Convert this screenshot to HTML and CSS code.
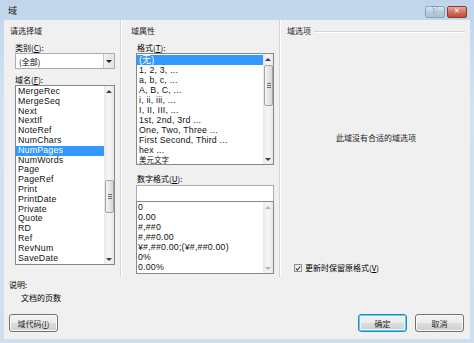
FILE: index.html
```html
<!DOCTYPE html>
<html lang="zh-CN">
<head>
    <meta charset="UTF-8">
    <title>域</title>
    <link rel="stylesheet" href="styles.css">
</head>
<body>
    <div class="window">
        <div class="titlebar">
            <span class="title">域</span>
            <div class="caption-btns">
                <span class="cap-btn cap-help">?</span>
                <span class="cap-btn cap-close">✕</span>
            </div>
        </div>

        <div class="client">
            <div class="panels">
                <!-- 请选择域 -->
                <div class="panel panel-left">
                    <div class="heading">请选择域</div>
                    <div class="field-label">类别(<u>C</u>):</div>
                    <div class="combo">
                        <span class="combo-text">(全部)</span>
                        <span class="combo-btn"><span class="arrow-down"></span></span>
                    </div>
                    <div class="field-label">域名(<u>F</u>):</div>
                    <div class="listbox list-names">
                        <div class="items">
                            <div class="item">MergeRec</div>
                            <div class="item">MergeSeq</div>
                            <div class="item">Next</div>
                            <div class="item">NextIf</div>
                            <div class="item">NoteRef</div>
                            <div class="item">NumChars</div>
                            <div class="item selected">NumPages</div>
                            <div class="item">NumWords</div>
                            <div class="item">Page</div>
                            <div class="item">PageRef</div>
                            <div class="item">Print</div>
                            <div class="item">PrintDate</div>
                            <div class="item">Private</div>
                            <div class="item">Quote</div>
                            <div class="item">RD</div>
                            <div class="item">Ref</div>
                            <div class="item">RevNum</div>
                            <div class="item">SaveDate</div>
                        </div>
                        <div class="scrollbar">
                            <span class="sb-btn"><span class="arrow-up"></span></span>
                            <div class="sb-track"><div class="thumb thumb-names"><span class="grip"></span></div></div>
                            <span class="sb-btn"><span class="arrow-down small"></span></span>
                        </div>
                    </div>
                </div>

                <!-- 域属性 -->
                <div class="panel panel-mid">
                    <div class="heading">域属性</div>
                    <div class="field-label">格式(<u>T</u>):</div>
                    <div class="listbox list-format">
                        <div class="items">
                            <div class="item selected">(无)</div>
                            <div class="item">1, 2, 3, ...</div>
                            <div class="item">a, b, c, ...</div>
                            <div class="item">A, B, C, ...</div>
                            <div class="item">i, ii, iii, ...</div>
                            <div class="item">I, II, III, ...</div>
                            <div class="item">1st, 2nd, 3rd ...</div>
                            <div class="item">One, Two, Three ...</div>
                            <div class="item">First Second, Third ...</div>
                            <div class="item">hex ...</div>
                            <div class="item cjk">美元文字</div>
                        </div>
                        <div class="scrollbar">
                            <span class="sb-btn"><span class="arrow-up"></span></span>
                            <div class="sb-track"><div class="thumb thumb-format"><span class="grip"></span></div></div>
                            <span class="sb-btn"><span class="arrow-down small"></span></span>
                        </div>
                    </div>
                    <div class="field-label gap-top">数字格式(<u>U</u>):</div>
                    <div class="textbox"></div>
                    <div class="listbox list-number">
                        <div class="items">
                            <div class="item">0</div>
                            <div class="item">0.00</div>
                            <div class="item">#,##0</div>
                            <div class="item">#,##0.00</div>
                            <div class="item">¥#,##0.00;(¥#,##0.00)</div>
                            <div class="item">0%</div>
                            <div class="item">0.00%</div>
                        </div>
                        <div class="scrollbar disabled">
                            <span class="sb-btn"><span class="arrow-up"></span></span>
                            <div class="sb-track"></div>
                            <span class="sb-btn"><span class="arrow-down small"></span></span>
                        </div>
                    </div>
                </div>

                <!-- 域选项 -->
                <div class="panel panel-right">
                    <div class="heading heading-line"><span>域选项</span><span class="rule"></span></div>
                    <div class="no-options">此域没有合适的域选项</div>
                    <label class="check-row">
                        <span class="checkbox">
                            <svg width="7" height="7" viewBox="0 0 7 7"><path d="M1 3.5 L2.8 5.3 L6 1.2" fill="none" stroke="#3a4a6b" stroke-width="1.3"/></svg>
                        </span>
                        <span>更新时保留原格式(<u>V</u>)</span>
                    </label>
                </div>
            </div>

            <div class="desc">
                <div class="desc-label">说明:</div>
                <div class="desc-text">文档的页数</div>
            </div>

            <div class="button-row">
                <button class="btn">域代码(<u>I</u>)</button>
                <div class="button-group">
                    <button class="btn btn-default">确定</button>
                    <button class="btn">取消</button>
                </div>
            </div>
        </div>
    </div>
</body>
</html>
```

FILE: styles.css
```css
* {
    box-sizing: border-box;
}
body {
    margin: 0;
    width: 474px;
    height: 343px;
    overflow: hidden;
    font-family: "Noto Sans", "Noto Sans CJK SC", sans-serif;
    font-size: 8px;
    color: #000;
}
u {
    text-decoration: underline;
}
.window {
    height: 343px;
    display: flex;
    flex-direction: column;
    padding: 0 4px 4px;
    background: linear-gradient(#c0d5eb, #d3e2f2 30%, #cfdff0);
}

/* title bar */
.titlebar {
    height: 20px;
    display: flex;
    align-items: center;
    justify-content: space-between;
}
.title {
    font-family: "Noto Sans CJK SC", sans-serif;
    font-size: 9px;
    padding-left: 4px;
    color: #1e1e1e;
}
.caption-btns {
    display: flex;
    gap: 2px;
    margin-right: 3px;
    margin-top: 3px;
}
.cap-btn {
    width: 20px;
    height: 12px;
    border-radius: 2px;
    display: flex;
    align-items: center;
    justify-content: center;
    font-family: "DejaVu Sans", sans-serif;
    font-weight: bold;
    font-size: 8px;
    line-height: 1;
    color: #fff;
}
.cap-help {
    border: 1px solid #8aa3bd;
    background: linear-gradient(#dfe9f4, #b9cde2 50%, #aac2dc);
    color: #fff;
    text-shadow: 0 0 1px #34507a, 0 0 1px #34507a;
}
.cap-close {
    border: 1px solid #8b3a30;
    background: linear-gradient(#e9a99b, #d3715f 50%, #c14c35);
    font-size: 7px;
}

/* client area */
.client {
    flex: 1;
    display: flex;
    flex-direction: column;
    background: #f0f0f0;
}
.panels {
    display: flex;
    height: 257px;
}
.panel {
    display: flex;
    flex-direction: column;
    padding-top: 5px;
}
.panel + .panel {
    border-left: 1px solid #fff;
}
.panel-left {
    width: 117px;
    padding-left: 6px;
    border-right: 1px solid #d5d5d5;
}
.panel-mid {
    width: 159px;
    padding-left: 9px;
    border-right: 1px solid #d5d5d5;
}
.panel-right {
    flex: 1;
    padding-left: 6px;
    padding-right: 5px;
}
.heading {
    font-family: "Noto Sans CJK SC", sans-serif;
    line-height: 12px;
    color: #1e1e1e;
}
.heading-line {
    display: flex;
    align-items: center;
    gap: 3px;
}
.heading-line .rule {
    flex: 1;
    height: 1px;
    background: #d5d5d5;
    box-shadow: 0 1px #fff;
}
.field-label {
    font-family: "Noto Sans CJK SC", sans-serif;
    line-height: 11px;
    margin-top: 5px;
    padding-left: 5px;
}
.panel-mid .field-label {
    padding-left: 6px;
}
.field-label.gap-top {
    margin-top: 8px;
    line-height: 12px;
}

/* combo */
.combo {
    margin-left: 5px;
    width: 100px;
    height: 16px;
    border: 1px solid #abadb3;
    background: #fff;
    display: flex;
    align-items: center;
}
.combo-text {
    flex: 1;
    padding-left: 3px;
    font-family: "Noto Sans CJK SC", sans-serif;
}
.combo-btn {
    width: 11px;
    height: 14px;
    border-left: 1px solid #c2c6ce;
    background: linear-gradient(to right, #f2f2f2, #e2e2e2);
    display: flex;
    align-items: center;
    justify-content: center;
}

/* arrows */
.arrow-down {
    width: 0;
    height: 0;
    border-left: 3px solid transparent;
    border-right: 3px solid transparent;
    border-top: 3px solid #222;
}
.arrow-up {
    width: 0;
    height: 0;
    border-left: 3px solid transparent;
    border-right: 3px solid transparent;
    border-bottom: 3px solid #3e3e3e;
}
.arrow-down.small {
    border-top-color: #3e3e3e;
}

/* list boxes */
.listbox {
    display: flex;
    border: 1px solid #828790;
    background: #fff;
    overflow: hidden;
}
.items {
    flex: 1;
    overflow: hidden;
}
.item {
    height: 9.8px;
    line-height: 9.8px;
    font-family: "Liberation Sans", sans-serif;
    font-size: 8.8px;
    letter-spacing: 0.2px;
    padding-left: 2px;
    white-space: nowrap;
    color: #111;
}
.item.cjk {
    font-family: "Noto Sans CJK SC", sans-serif;
    font-size: 7.5px;
    letter-spacing: 0;
}
.item.selected {
    background: #3399ff;
    color: #fff;
}
.list-names {
    margin-left: 5px;
    width: 100px;
    height: 180px;
}
.list-names .items {
    padding-top: 1px;
}
.list-format {
    width: 138px;
    height: 112px;
    margin-left: 5px;
}
.list-format .items {
    padding-top: 1px;
}
.list-format .item {
    height: 10px;
    line-height: 10px;
}
.list-number {
    width: 138px;
    height: 73px;
    margin-left: 5px;
}
.list-number .item {
    height: 10px;
    line-height: 10px;
    padding-left: 1px;
}
.textbox {
    width: 138px;
    height: 16px;
    margin-left: 5px;
    border: 1px solid #abadb3;
    border-bottom: none;
    background: #fff;
}

/* scroll bars */
.scrollbar {
    width: 10px;
    display: flex;
    flex-direction: column;
    background: linear-gradient(to right, #e8e8e8, #f4f4f4 40%, #f4f4f4 60%, #e8e8e8);
}
.sb-btn {
    height: 10px;
    display: flex;
    align-items: center;
    justify-content: center;
}
.sb-track {
    flex: 1;
}
.thumb {
    width: 9px;
    margin-left: 1px;
    border: 1px solid #a4a4a4;
    border-radius: 2px;
    background: linear-gradient(to right, #f5f5f5, #e6e6e6 50%, #d7d7d7);
    display: flex;
    align-items: center;
    justify-content: center;
}
.grip {
    width: 4px;
    height: 5px;
    background: repeating-linear-gradient(#6d6d6d 0 1px, transparent 1px 2px);
}
.thumb-names {
    margin-top: 84px;
    height: 33px;
}
.thumb-format {
    margin-top: 1px;
    height: 41px;
}
.scrollbar.disabled .arrow-up {
    border-bottom-color: #b5b5b5;
}
.scrollbar.disabled .arrow-down {
    border-top-color: #b5b5b5;
}

/* 域选项 */
.no-options {
    font-family: "Noto Sans CJK SC", sans-serif;
    line-height: 12px;
    margin-top: 95px;
    text-align: center;
    color: #1e1e1e;
}
.check-row {
    display: flex;
    align-items: center;
    gap: 3px;
    margin-top: 118px;
    padding-left: 7px;
    line-height: 12px;
    font-family: "Noto Sans CJK SC", sans-serif;
}
.checkbox {
    width: 8px;
    height: 8px;
    border: 1px solid #8e8f8f;
    background: linear-gradient(135deg, #e4e4e4, #fcfcfc);
    display: flex;
    align-items: center;
    justify-content: center;
}

/* description */
.desc {
    padding-left: 5px;
    padding-top: 2px;
    font-family: "Noto Sans CJK SC", sans-serif;
    line-height: 12px;
}
.desc-label {
    line-height: 12px;
}
.desc-text {
    line-height: 13px;
    padding-left: 12px;
}

/* buttons */
.button-row {
    display: flex;
    justify-content: space-between;
    margin-top: 10px;
    padding: 0 6px 0 5px;
}
.button-group {
    display: flex;
    gap: 8px;
}
.btn {
    width: 49px;
    height: 18px;
    padding: 0;
    border: 1px solid #707070;
    border-radius: 3px;
    background: linear-gradient(#f2f2f2, #ebebeb 50%, #dddddd 51%, #cfcfcf);
    box-shadow: inset 0 0 0 1px #fcfcfc;
    font-family: "Noto Sans CJK SC", sans-serif;
    font-size: 8px;
    color: #1e1e1e;
}
.btn-default {
    border-color: #3c7fb1;
    box-shadow: inset 0 0 0 1px #48d7f7, inset 0 0 0 2px #eaf6fd;
}
```
